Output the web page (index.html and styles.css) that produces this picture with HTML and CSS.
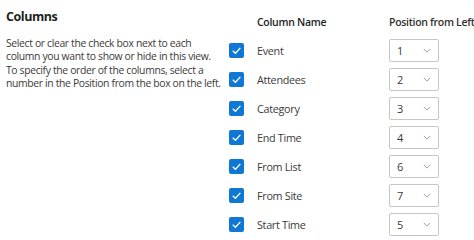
FILE: index.html
```html
<!DOCTYPE html>
<html>
<head>
<meta charset="utf-8">
<link rel="stylesheet" href="styles.css">
</head>
<body>
<div class="page">
  <div class="intro">
    <h2 class="title">Columns</h2>
    <p class="desc">Select or clear the check box next to each<br>column you want to show or hide in this view.<br>To specify the order of the columns, select a<br>number in the Position from the box on the left.</p>
  </div>
  <div class="table">
    <div class="row head">
      <span class="cell-check"></span>
      <span class="cell-name">Column Name</span>
      <span class="cell-pos">Position from Left</span>
    </div>
    <div class="row"><span class="cell-check"><span class="check"><svg viewBox="0 0 14 14"><path d="M3.5 7.2 L6 9.6 L10.6 4.6"/></svg></span></span><span class="cell-name">Event</span><span class="cell-pos"><span class="select"><span class="val">1</span><svg class="chev" viewBox="0 0 10 6"><path d="M1 1 L5 5 L9 1"/></svg></span></span></div>
    <div class="row"><span class="cell-check"><span class="check"><svg viewBox="0 0 14 14"><path d="M3.5 7.2 L6 9.6 L10.6 4.6"/></svg></span></span><span class="cell-name">Attendees</span><span class="cell-pos"><span class="select"><span class="val">2</span><svg class="chev" viewBox="0 0 10 6"><path d="M1 1 L5 5 L9 1"/></svg></span></span></div>
    <div class="row"><span class="cell-check"><span class="check"><svg viewBox="0 0 14 14"><path d="M3.5 7.2 L6 9.6 L10.6 4.6"/></svg></span></span><span class="cell-name">Category</span><span class="cell-pos"><span class="select"><span class="val">3</span><svg class="chev" viewBox="0 0 10 6"><path d="M1 1 L5 5 L9 1"/></svg></span></span></div>
    <div class="row"><span class="cell-check"><span class="check"><svg viewBox="0 0 14 14"><path d="M3.5 7.2 L6 9.6 L10.6 4.6"/></svg></span></span><span class="cell-name">End Time</span><span class="cell-pos"><span class="select"><span class="val">4</span><svg class="chev" viewBox="0 0 10 6"><path d="M1 1 L5 5 L9 1"/></svg></span></span></div>
    <div class="row"><span class="cell-check"><span class="check"><svg viewBox="0 0 14 14"><path d="M3.5 7.2 L6 9.6 L10.6 4.6"/></svg></span></span><span class="cell-name">From List</span><span class="cell-pos"><span class="select"><span class="val">6</span><svg class="chev" viewBox="0 0 10 6"><path d="M1 1 L5 5 L9 1"/></svg></span></span></div>
    <div class="row"><span class="cell-check"><span class="check"><svg viewBox="0 0 14 14"><path d="M3.5 7.2 L6 9.6 L10.6 4.6"/></svg></span></span><span class="cell-name">From Site</span><span class="cell-pos"><span class="select"><span class="val">7</span><svg class="chev" viewBox="0 0 10 6"><path d="M1 1 L5 5 L9 1"/></svg></span></span></div>
    <div class="row"><span class="cell-check"><span class="check"><svg viewBox="0 0 14 14"><path d="M3.5 7.2 L6 9.6 L10.6 4.6"/></svg></span></span><span class="cell-name">Start Time</span><span class="cell-pos"><span class="select"><span class="val">5</span><svg class="chev" viewBox="0 0 10 6"><path d="M1 1 L5 5 L9 1"/></svg></span></span></div>
  </div>
</div>
</body>
</html>
```
FILE: styles.css
```css
html, body {
  margin: 0;
  padding: 0;
  background: #ffffff;
}
body {
  font-family: "Open Sans", "Noto Sans", sans-serif;
  color: #323130;
  width: 474px;
  height: 240px;
  overflow: hidden;
}
.page {
  display: flex;
}
.intro {
  width: 223px;
  padding-left: 6px;
  padding-top: 8px;
  box-sizing: border-box;
}
.title {
  margin: 0;
  font-size: 12.5px;
  line-height: 18px;
  font-weight: 700;
  letter-spacing: -0.45px;
  color: #201f1e;
}
.desc {
  margin: 11px 0 0 0;
  font-size: 10.4px;
  line-height: 13.3px;
  letter-spacing: -0.35px;
  color: #3b3a39;
  white-space: nowrap;
}
.table {
  padding-top: 7.5px;
  display: flex;
  flex-direction: column;
}
.row {
  display: grid;
  grid-template-columns: 6px 28px 132px 50px;
  height: 28.9px;
  align-items: center;
  font-size: 10.8px;
  letter-spacing: -0.3px;
}
.cell-check {
  grid-column: 2;
  display: flex;
  align-items: center;
}
.cell-name {
  grid-column: 3;
  color: #3b3a39;
}
.cell-pos {
  grid-column: 4;
  white-space: nowrap;
}
.head {
  font-weight: 600;
  font-size: 10.5px;
  letter-spacing: -0.3px;
}
.head .cell-name {
  color: #201f1e;
}
.check {
  width: 15px;
  height: 15px;
  background: #0f78d4;
  border-radius: 2px;
  display: flex;
}
.check svg {
  width: 15px;
  height: 15px;
  fill: none;
  stroke: #ffffff;
  stroke-width: 1.2;
}
.select {
  box-sizing: border-box;
  width: 50px;
  height: 23px;
  border: 1px solid #c8c6c4;
  border-radius: 2px;
  display: flex;
  align-items: center;
  justify-content: space-between;
  padding: 0 7px 0 7px;
}
.val {
  font-size: 11px;
  color: #3b3a39;
}
.chev {
  width: 8px;
  height: 5px;
  fill: none;
  stroke: #8a8886;
  stroke-width: 1;
}
```
